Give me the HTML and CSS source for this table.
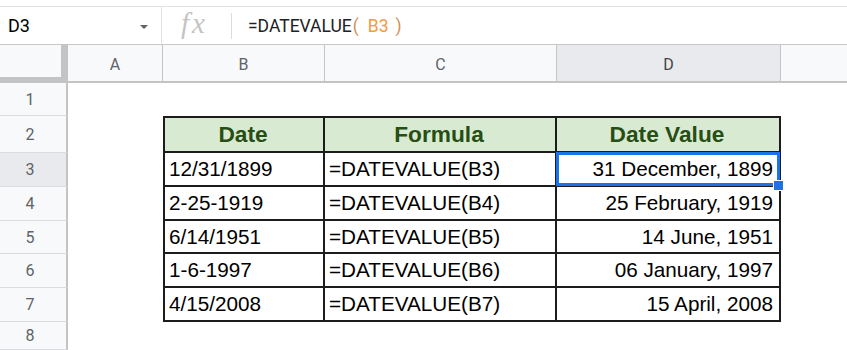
FILE: index.html
```html
<!DOCTYPE html>
<html>
<head>
<meta charset="utf-8">
<link rel="stylesheet" href="styles.css">
</head>
<body>
<div class="app">
  <div class="fbar">
    <div class="namebox"><span class="ref">D3</span><span class="caret"></span></div>
    <div class="fx">fx</div>
    <div class="vsep"></div>
    <div class="formula">=DATEVALUE<span class="paren open">(</span><span class="arg">B3</span><span class="paren close">)</span></div>
  </div>
  <div class="sheet">
    <div class="corner"></div>
    <div class="colh">A</div>
    <div class="colh">B</div>
    <div class="colh">C</div>
    <div class="colh active">D</div>
    <div class="colh last"></div>

    <div class="rowh">1</div>
    <div class="c"></div><div class="c"></div><div class="c"></div><div class="c"></div><div class="c"></div>

    <div class="rowh">2</div>
    <div class="c"></div>
    <div class="t th first top">Date</div>
    <div class="t th top">Formula</div>
    <div class="t th top">Date Value</div>
    <div class="c"></div>

    <div class="rowh active">3</div>
    <div class="c"></div>
    <div class="t first">12/31/1899</div>
    <div class="t">=DATEVALUE(B3)</div>
    <div class="t r selected">31 December, 1899</div>
    <div class="c"></div>

    <div class="rowh">4</div>
    <div class="c"></div>
    <div class="t first">2-25-1919</div>
    <div class="t">=DATEVALUE(B4)</div>
    <div class="t r">25 February, 1919</div>
    <div class="c"></div>

    <div class="rowh">5</div>
    <div class="c"></div>
    <div class="t first">6/14/1951</div>
    <div class="t">=DATEVALUE(B5)</div>
    <div class="t r">14 June, 1951</div>
    <div class="c"></div>

    <div class="rowh">6</div>
    <div class="c"></div>
    <div class="t first">1-6-1997</div>
    <div class="t">=DATEVALUE(B6)</div>
    <div class="t r">06 January, 1997</div>
    <div class="c"></div>

    <div class="rowh">7</div>
    <div class="c"></div>
    <div class="t first">4/15/2008</div>
    <div class="t">=DATEVALUE(B7)</div>
    <div class="t r">15 April, 2008</div>
    <div class="c"></div>

    <div class="rowh">8</div>
    <div class="c"></div><div class="c"></div><div class="c"></div><div class="c"></div><div class="c"></div>
  </div>
</div>
</body>
</html>
```
FILE: styles.css
```css
* { box-sizing: border-box; }
html, body { margin: 0; padding: 0; background: #fff; }
body { font-family: Roboto, "Liberation Sans", sans-serif; overflow: hidden; }
.app { width: 847px; height: 350px; overflow: hidden; }

.fbar {
  margin-top: 6px;
  height: 39px;
  border-top: 1px solid #e3e3e3;
  border-bottom: 1px solid #c7c7c7;
  display: flex;
  align-items: center;
}
.namebox {
  width: 162px;
  height: 100%;
  border-right: 1px solid #e3e3e3;
  display: flex;
  align-items: center;
  justify-content: space-between;
  padding: 0 13px 0 8px;
}
.ref { font-size: 18px; color: #000; }
.caret {
  width: 0; height: 0;
  border-left: 4px solid transparent;
  border-right: 4px solid transparent;
  border-top: 4px solid #5f6368;
  margin-top: 2px;
}
.fx {
  width: 69px;
  padding-left: 19px;
  font-family: "Liberation Serif", serif;
  font-style: italic;
  font-size: 29px;
  letter-spacing: 3px;
  color: #c4c4c4;
  line-height: 1;
  margin-top: -4px;
}
.vsep { width: 1px; height: 26px; background: #dadce0; }
.formula { padding-left: 16px; font-size: 17.5px; color: #202124; }
.paren { color: #d1925a; }
.paren.open { padding: 0 9px 0 1px; }
.paren.close { padding: 0 0 0 7px; }
.arg { color: #f29a45; }

.sheet {
  display: grid;
  grid-template-columns: 68px 95px 162px 232px 224px 1fr;
  grid-template-rows: 38px 33px 37px 34px 34px 33px 34px 34px 28px;
  height: 305px;
}
.corner {
  background: #f8f9fa;
  border-right: 7px solid #c4c4c4;
  border-bottom: 6px solid #c4c4c4;
}
.colh {
  background: #f8f9fa;
  border-right: 1px solid #c4c4c4;
  border-bottom: 2px solid #c4c4c4;
  display: flex;
  align-items: center;
  justify-content: center;
  font-size: 16px;
  color: #5f6368;
  padding-top: 2px;
}
.colh.active { background: #e8eaed; color: #444; }
.colh.last { border-right: none; }
.rowh {
  background: #f8f9fa;
  border-right: 2px solid #c4c4c4;
  border-bottom: 1px solid #dadce0;
  display: flex;
  align-items: center;
  justify-content: center;
  padding-right: 6px;
  font-size: 16px;
  color: #5f6368;
}
.rowh.active { background: #e8eaed; }
.c { background: #fff; }

.t {
  font-family: "Liberation Sans", Arial, sans-serif;
  font-size: 20.7px;
  color: #000;
  border-right: 2px solid #1c1c1c;
  border-bottom: 2px solid #1c1c1c;
  display: flex;
  align-items: center;
  padding: 0 6px 0 4px;
  white-space: nowrap;
}
.t.first { border-left: 2px solid #1c1c1c; }
.t.top { border-top: 2px solid #1c1c1c; }
.t.th {
  background: #d9ead3;
  color: #274e13;
  font-weight: bold;
  font-size: 22.7px;
  justify-content: center;
}
.t.r { justify-content: flex-end; }
.selected { position: relative; }
.selected::before {
  content: "";
  position: absolute;
  top: -1px; left: -1px; right: -1px; bottom: -1px;
  border: 3px solid #1a73e8;
}
.selected::after {
  content: "";
  position: absolute;
  right: -5px; bottom: -6px;
  width: 9px; height: 9px;
  background: #1a73e8;
  border: 1px solid #fff;
}
```
